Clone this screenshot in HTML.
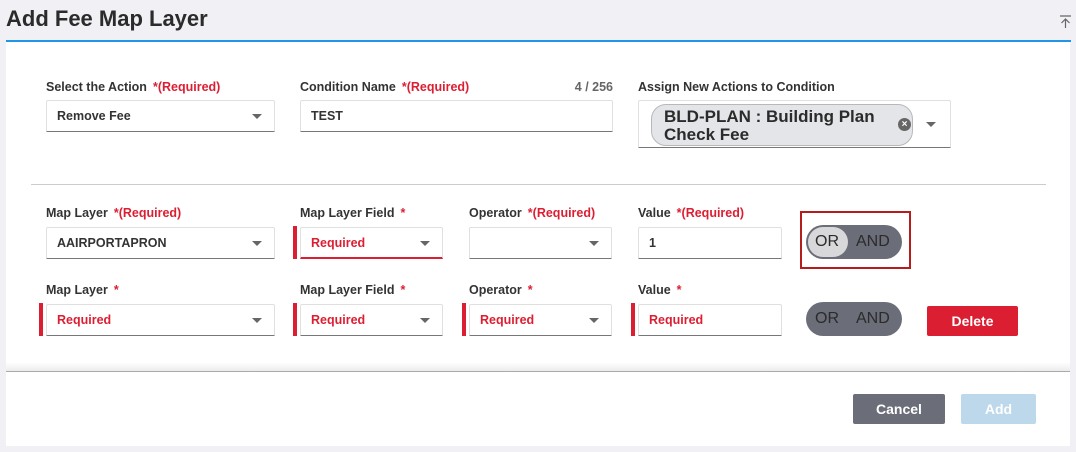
<!DOCTYPE html>
<html><head><style>
*{box-sizing:border-box;margin:0;padding:0}
body{width:1076px;height:452px;background:#f0f0f5;font-family:"Liberation Sans",sans-serif;position:relative;overflow:hidden;color:#333}
.a{position:absolute}
.panel{left:6px;top:42px;width:1064px;height:404px;background:#fff}
.lbl{position:absolute;font-size:12.5px;font-weight:bold;color:#333;white-space:nowrap}
.lbl i{font-style:normal;color:#dc1e32;margin-left:6px}
.box{position:absolute;border:1px solid #e0e0e0;border-bottom:1px solid #777;border-radius:2px 2px 0 0;background:#fff;font-size:12.5px;font-weight:bold;padding-left:10px;display:flex;align-items:center}
.box.r{color:#dc1e32}
.car{position:absolute;right:12px;top:50%;margin-top:-2px;border-left:5px solid transparent;border-right:5px solid transparent;border-top:5px solid #666}
.bar{position:absolute;width:4px;background:#dc1e32}
.tog{position:absolute;width:96px;border-radius:17px;background:#6b6e78;font-size:16px;color:#2b2b2b}
.tog span{position:absolute;top:50%;transform:translateY(-50%)}
.btn{position:absolute;color:#fff;font-weight:bold;font-size:14px;display:flex;align-items:center;justify-content:center;border-radius:2px}
</style></head><body>
<div class="a" style="left:6px;top:6px;font-size:22px;font-weight:bold;color:#2b2b2b">Add Fee Map Layer</div>
<svg class="a" style="left:1059px;top:15px" width="13" height="14" viewBox="0 0 13 14"><path d="M1 1H12M6.5 13V4M2.5 8L6.5 4L10.5 8" stroke="#666" stroke-width="1.2" fill="none"/></svg>
<div class="a panel"></div>
<div class="a" style="left:6px;top:40px;width:1065px;height:2px;background:#2196e8"></div>

<div class="lbl" style="left:46px;top:80px">Select the Action<i>*(Required)</i></div>
<div class="box" style="left:46px;top:100px;width:229px;height:32px">Remove Fee<span class="car"></span></div>
<div class="lbl" style="left:300px;top:80px">Condition Name<i>*(Required)</i></div>
<div class="lbl" style="left:560px;top:80px;width:53px;text-align:right;color:#666">4 / 256</div>
<div class="box" style="left:300px;top:100px;width:313px;height:32px">TEST</div>
<div class="lbl" style="left:638px;top:80px">Assign New Actions to Condition</div>
<div class="box" style="left:638px;top:100px;width:313px;height:48px;padding:0">
 <div class="a" style="left:12px;top:3px;width:262px;height:42px;background:#e3e5e9;border:1px solid #b8b8b8;border-radius:15px;font-size:17px;line-height:18px;padding:3px 0 0 12px;color:#2b2b2b">BLD-PLAN : Building Plan<br>Check Fee</div>
 <div class="a" style="left:259px;top:17px;width:13px;height:13px;border-radius:50%;background:#666;color:#fff;font-size:10px;line-height:13px;text-align:center">×</div>
 <span class="car" style="right:14px"></span>
</div>
<div class="a" style="left:31px;top:184px;width:1015px;height:1px;background:#ccc"></div>

<div class="lbl" style="left:46px;top:206px">Map Layer<i>*(Required)</i></div>
<div class="box" style="left:46px;top:227px;width:229px;height:32px">AAIRPORTAPRON<span class="car"></span></div>
<div class="lbl" style="left:300px;top:206px">Map Layer Field<i>*</i></div>
<div class="bar" style="left:293px;top:226px;height:33px"></div>
<div class="box r" style="left:300px;top:227px;width:143px;height:32px;border-bottom:2px solid #dc1e32">Required<span class="car"></span></div>
<div class="lbl" style="left:469px;top:206px">Operator<i>*(Required)</i></div>
<div class="box" style="left:469px;top:227px;width:143px;height:32px"><span class="car"></span></div>
<div class="lbl" style="left:638px;top:206px">Value<i>*(Required)</i></div>
<div class="box" style="left:638px;top:227px;width:144px;height:32px">1</div>
<div class="a" style="left:800px;top:211px;width:111px;height:58px;border:2px solid #b71c1c"></div>
<div class="tog" style="left:806px;top:225px;height:34px"><div class="a" style="left:2px;top:2px;width:40px;height:30px;border-radius:15px;background:#d8d8da"></div><span style="left:9px">OR</span><span style="left:50px">AND</span></div>

<div class="lbl" style="left:46px;top:283px">Map Layer<i>*</i></div>
<div class="bar" style="left:39px;top:303px;height:33px"></div>
<div class="box r" style="left:46px;top:304px;width:229px;height:32px">Required<span class="car"></span></div>
<div class="lbl" style="left:300px;top:283px">Map Layer Field<i>*</i></div>
<div class="bar" style="left:293px;top:303px;height:33px"></div>
<div class="box r" style="left:300px;top:304px;width:143px;height:32px">Required<span class="car"></span></div>
<div class="lbl" style="left:469px;top:283px">Operator<i>*</i></div>
<div class="bar" style="left:462px;top:303px;height:33px"></div>
<div class="box r" style="left:469px;top:304px;width:143px;height:32px">Required<span class="car"></span></div>
<div class="lbl" style="left:638px;top:283px">Value<i>*</i></div>
<div class="bar" style="left:631px;top:303px;height:33px"></div>
<div class="box r" style="left:638px;top:304px;width:144px;height:32px">Required</div>
<div class="tog" style="left:806px;top:302px;height:34px"><span style="left:9px">OR</span><span style="left:50px">AND</span></div>
<div class="btn" style="left:927px;top:306px;width:91px;height:30px;background:#dc1e32">Delete</div>

<div class="a" style="left:6px;top:362px;width:1064px;height:9px;background:linear-gradient(#fff,#ececee)"></div>
<div class="a" style="left:6px;top:371px;width:1064px;height:1px;background:#aaa"></div>
<div class="btn" style="left:853px;top:394px;width:92px;height:30px;background:#6b6e78">Cancel</div>
<div class="btn" style="left:961px;top:394px;width:75px;height:30px;background:#bcd8ea">Add</div>
</body></html>
